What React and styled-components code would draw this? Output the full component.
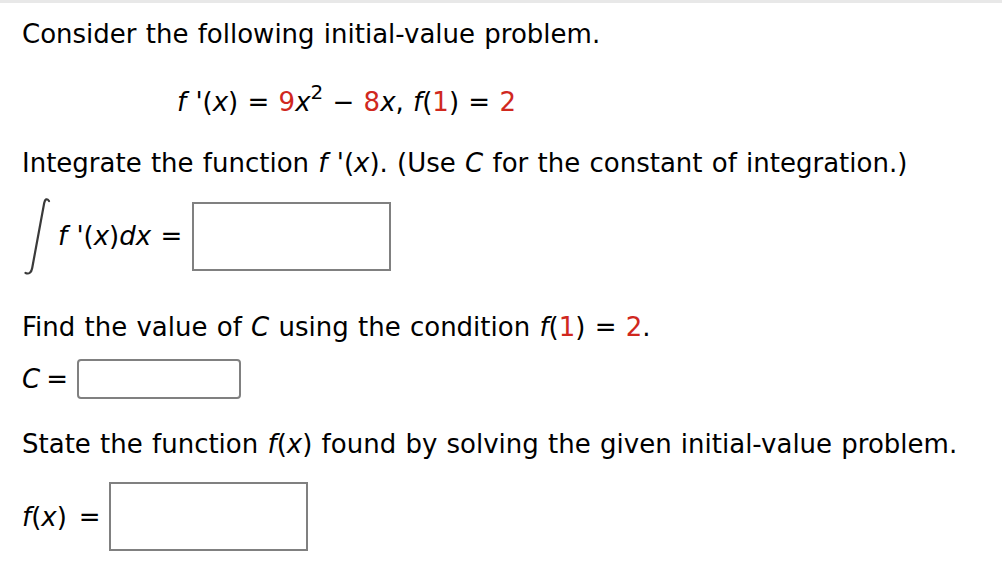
import React from "react";
import styled, { createGlobalStyle } from "styled-components";

const GlobalStyle = createGlobalStyle`
  html, body {
    margin: 0;
    padding: 0;
    background: #ffffff;
  }
  body {
    font-family: "DejaVu Sans", Verdana, sans-serif;
    color: #000000;
  }
`;

const Page = styled.div`
  border-top: 3px solid #e8e8e8;
  padding: 15px 22px 20px 22px;
  font-size: 26px;
  line-height: 32px;
  word-spacing: 1px;
`;

const Para = styled.p`
  margin: ${(p) => p.$top || 0}px 0 0 0;
  white-space: nowrap;
`;

const Equation = styled.div`
  margin-top: 36px;
  padding-left: 155px;
  white-space: nowrap;
`;

const I = styled.i`
  font-style: italic;
`;

const Red = styled.span`
  color: #d0281e;
`;

const Sup = styled.sup`
  font-size: 20px;
  line-height: 0;
  position: relative;
  top: -2px;
`;

const AnswerRow = styled.div`
  display: flex;
  align-items: center;
  margin-top: ${(p) => p.$top}px;
  height: ${(p) => p.$height}px;
`;

const Label = styled.span`
  white-space: pre;
  margin-right: ${(p) => p.$gap}px;
`;

const EqSign = styled.span`
  margin-left: ${(p) => p.$left || 0}px;
`;

const IntegralIcon = styled.svg`
  display: block;
  flex: none;
  margin-left: -4px;
`;

const Box = styled.div`
  box-sizing: border-box;
  flex: none;
  width: ${(p) => p.$w}px;
  height: ${(p) => p.$h}px;
  border: 2px solid #808080;
  border-radius: ${(p) => (p.$round ? 4 : 0)}px;
  background: #ffffff;
`;

function Integral() {
  return (
    <IntegralIcon width="40" height="80" viewBox="0 0 40 80">
      <path
        d="M31 5 C29 2 27 3 26.2 7 L14.2 72 C13.4 76.5 11 78.5 7.5 77"
        fill="none"
        stroke="#3a3a3a"
        strokeWidth="2.2"
        strokeLinecap="round"
      />
    </IntegralIcon>
  );
}

export default function App() {
  return (
    <>
      <GlobalStyle />
      <Page>
        <Para>Consider the following initial-value problem.</Para>
        <Equation>
          <I>f</I> '(<I>x</I>) = <Red>9</Red>
          <I>x</I>
          <Sup>2</Sup> − <Red>8</Red>
          <I>x</I>, <I>f</I>(<Red>1</Red>) = <Red>2</Red>
        </Equation>
        <Para $top={29}>
          Integrate the function <I>f</I> '(<I>x</I>). (Use <I>C</I> for the
          constant of integration.)
        </Para>
        <AnswerRow $top={18} $height={78}>
          <Integral />
          <Label $gap={10}>
            <I>f</I> '(<I>x</I>)<I>dx</I> =
          </Label>
          <Box $w={199} $h={69} />
        </AnswerRow>
        <Para $top={36}>
          Find the value of <I>C</I> using the condition <I>f</I>(
          <Red>1</Red>) = <Red>2</Red>.
        </Para>
        <AnswerRow $top={16} $height={40}>
          <Label $gap={9}>
            <I>C</I>
            <EqSign $left={6}>=</EqSign>
          </Label>
          <Box $w={164} $h={40} $round />
        </AnswerRow>
        <Para $top={29}>
          State the function <I>f</I>(<I>x</I>) found by solving the given
          initial-value problem.
        </Para>
        <AnswerRow $top={22} $height={69}>
          <Label $gap={8}>
            <I>f</I>(<I>x</I>)
            <EqSign $left={12}>=</EqSign>
          </Label>
          <Box $w={199} $h={69} />
        </AnswerRow>
      </Page>
    </>
  );
}
